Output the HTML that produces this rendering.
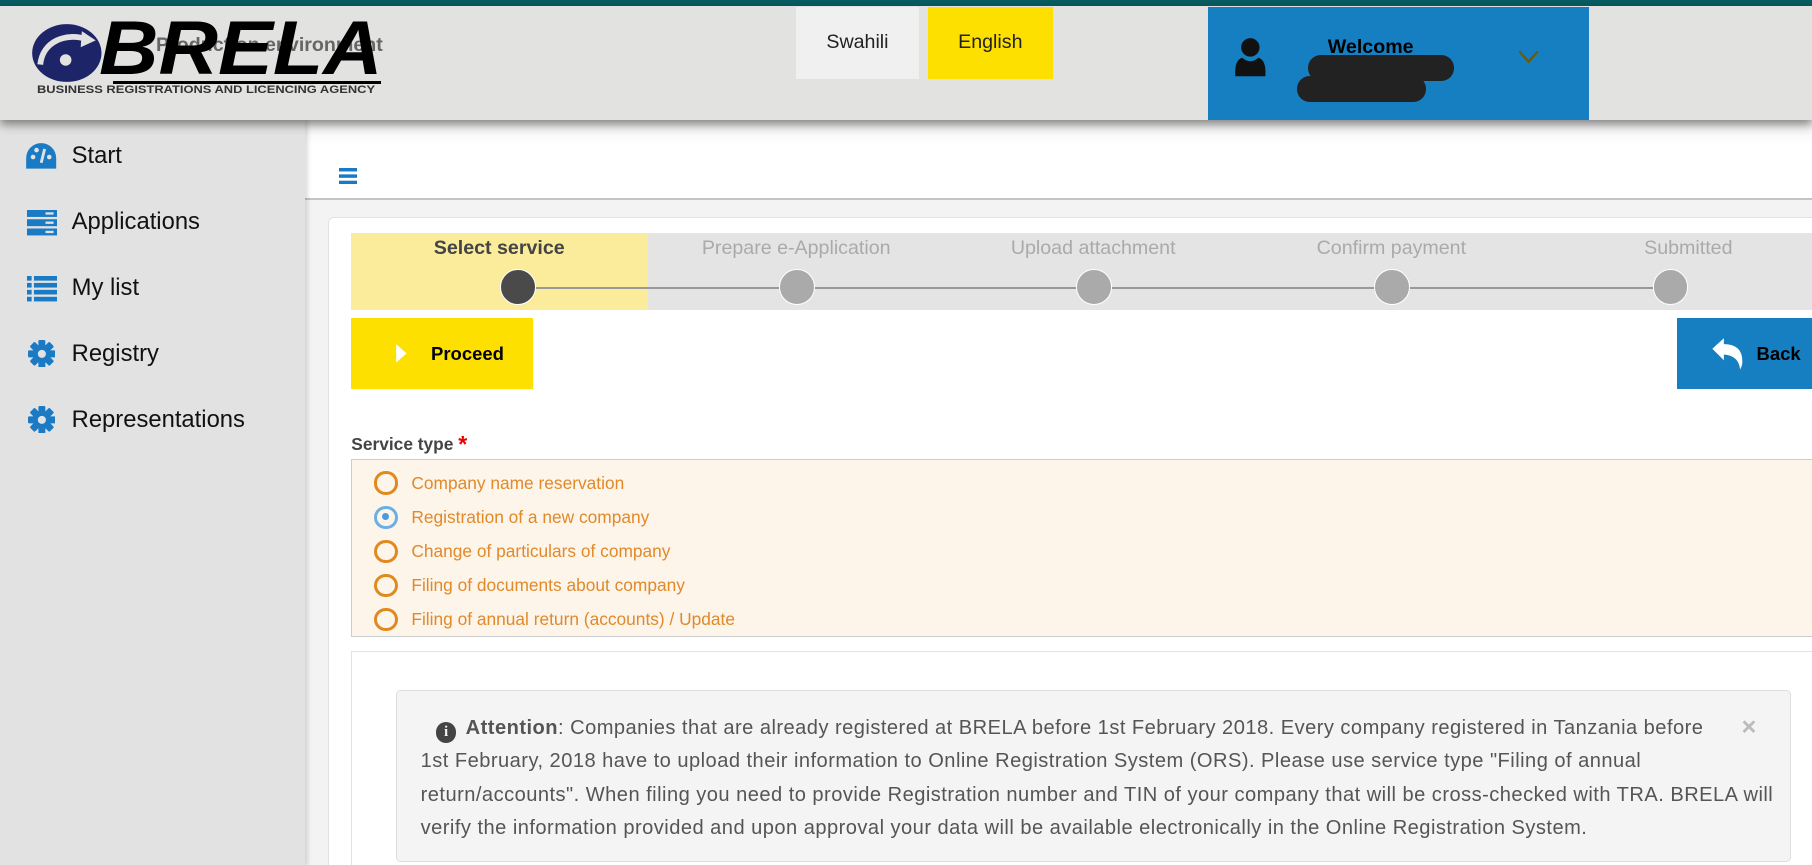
<!DOCTYPE html>
<html><head><meta charset="utf-8"><style>
*{margin:0;padding:0;box-sizing:border-box}
html,body{width:1812px;height:865px;overflow:hidden;background:#f3f3f3;font-family:"Liberation Sans",Arial,sans-serif}
#w{position:relative;width:1568px;height:749px;zoom:1.1556;overflow:hidden;background:#f3f3f3}
.a{position:absolute}
.r{display:inline-block;width:20px;height:20px;border:3px solid #e08a1e;border-radius:50%;vertical-align:middle;margin-right:12px;position:relative;top:-1px}
</style></head><body><div id="w">
<div class="a" style="left:0;top:0;width:1568px;height:5px;background:#085c62"></div>
<div class="a" style="left:0;top:5px;width:1568px;height:99px;background:#e2e2e0;box-shadow:0 4px 8px rgba(0,0,0,.45);z-index:3"></div>
<!-- logo -->
<div class="a" style="left:0;top:5px;width:700px;height:99px;z-index:4">
<svg class="a" style="left:27px;top:15px" width="62" height="52" viewBox="0 0 62 52"><ellipse cx="31" cy="26" rx="30" ry="25" fill="#1d2468"/><path d="M8 36 C10 16 30 8 48 14" stroke="#e2e2e0" stroke-width="5" fill="none"/><path d="M44 7 L56 15 L43 21Z" fill="#e2e2e0"/><circle cx="30" cy="32" r="5" fill="#e2e2e0"/></svg>
<div class="a" style="left:135px;top:24px;font-size:17px;font-weight:bold;color:#666">Production environment</div>
<div class="a" style="left:86px;top:6px;font-size:66px;font-weight:bold;font-style:italic;color:#000;line-height:62px;transform:scaleX(1.08);transform-origin:0 0">BRELA</div>
<div class="a" style="left:98px;top:65px;width:232px;height:3px;background:#000"></div>
<div class="a" style="left:32px;top:68px;font-size:9.3px;font-weight:bold;color:#333;white-space:nowrap;transform:scaleX(1.2);transform-origin:0 0">BUSINESS REGISTRATIONS AND LICENCING AGENCY</div>
<div class="a" style="left:689px;top:1px;width:106px;height:62px;background:#f0f0f0;font-size:17px;color:#222;text-align:center;line-height:62px">Swahili</div>
</div>
<div class="a" style="left:803px;top:6px;width:108px;height:62px;background:#fde000;font-size:17px;color:#222;text-align:center;line-height:62px;z-index:4">English</div>
<div class="a" style="left:1045px;top:6px;width:330px;height:98px;background:#167fc2;z-index:4">
<svg class="a" style="left:22px;top:26px" width="30" height="36" viewBox="0 0 30 36"><circle cx="15" cy="9" r="8" fill="#111"/><path d="M2 34 Q1 20 8 18 Q15 24 22 18 Q29 20 28 34Z" fill="#111"/></svg>
<div class="a" style="left:104px;top:25px;font-size:17px;font-weight:bold;color:#000">Welcome</div>
<div class="a" style="left:87px;top:42px;width:126px;height:22px;border-radius:11px;background:#222"></div>
<div class="a" style="left:77px;top:60px;width:112px;height:22px;border-radius:11px;background:#222"></div>
<svg class="a" style="left:268px;top:36px" width="20" height="14"><path d="M2 2 L10 11 L18 2" stroke="#665c10" stroke-width="2" fill="none"/></svg>
</div>
<!-- sidebar -->
<div class="a" style="left:0;top:104px;width:264px;height:645px;background:#e2e2e2;box-shadow:2px 0 4px rgba(0,0,0,.15);z-index:2;font-size:20.6px;color:#111">
<svg class="a" style="left:22px;top:19px" width="28" height="24" viewBox="0 0 28 24"><path d="M14 1 A13 13 0 0 0 1 14 L1 23 L27 23 L27 14 A13 13 0 0 0 14 1Z" fill="#1a7ac4"/><circle cx="7" cy="13" r="2" fill="#e2e2e2"/><circle cx="10" cy="7" r="2" fill="#e2e2e2"/><circle cx="21" cy="13" r="2" fill="#e2e2e2"/><path d="M14 18 L17 6" stroke="#e2e2e2" stroke-width="2.5"/></svg>
<div class="a" style="left:62px;top:19px">Start</div>
<svg class="a" style="left:23px;top:78px" width="26" height="22"><rect y="0" width="26" height="6" fill="#1a7ac4"/><rect y="8" width="26" height="6" fill="#1a7ac4"/><rect y="16" width="26" height="6" fill="#1a7ac4"/><rect x="16" y="2" width="7" height="2" fill="#e2e2e2"/><rect x="16" y="10" width="7" height="2" fill="#e2e2e2"/><rect x="16" y="18" width="7" height="2" fill="#e2e2e2"/></svg>
<div class="a" style="left:62px;top:76px">Applications</div>
<svg class="a" style="left:23px;top:135px" width="26" height="22"><g fill="#1a7ac4"><rect y="0" width="4" height="4"/><rect x="6" y="0" width="20" height="4"/><rect y="6" width="4" height="4"/><rect x="6" y="6" width="20" height="4"/><rect y="12" width="4" height="4"/><rect x="6" y="12" width="20" height="4"/><rect y="18" width="4" height="4"/><rect x="6" y="18" width="20" height="4"/></g></svg>
<div class="a" style="left:62px;top:133px">My list</div>
<svg class="a" style="left:24px;top:190px" width="24" height="24" viewBox="0 0 24 24"><g fill="#1a7ac4"><circle cx="12" cy="12" r="8"/><rect x="9" y="0" width="6" height="24" rx="1"/><rect x="0" y="9" width="24" height="6" rx="1"/><rect x="9" y="0" width="6" height="24" rx="1" transform="rotate(45 12 12)"/><rect x="9" y="0" width="6" height="24" rx="1" transform="rotate(-45 12 12)"/></g><circle cx="12" cy="12" r="3.5" fill="#e2e2e2"/></svg>
<div class="a" style="left:62px;top:190px">Registry</div>
<svg class="a" style="left:24px;top:247px" width="24" height="24" viewBox="0 0 24 24"><g fill="#1a7ac4"><circle cx="12" cy="12" r="8"/><rect x="9" y="0" width="6" height="24" rx="1"/><rect x="0" y="9" width="24" height="6" rx="1"/><rect x="9" y="0" width="6" height="24" rx="1" transform="rotate(45 12 12)"/><rect x="9" y="0" width="6" height="24" rx="1" transform="rotate(-45 12 12)"/></g><circle cx="12" cy="12" r="3.5" fill="#e2e2e2"/></svg>
<div class="a" style="left:62px;top:247px">Representations</div>
</div>
<!-- main -->
<div class="a" style="left:264px;top:104px;width:1304px;height:69px;background:linear-gradient(#eee,#fff 30%);border-bottom:2px solid #c4c4c4"></div>
<svg class="a" style="left:293px;top:145px" width="16" height="14"><g fill="#1a7ac4"><rect y="0" width="16" height="3"/><rect y="5.5" width="16" height="3"/><rect y="11" width="16" height="3"/></g></svg>
<div class="a" style="left:284px;top:188px;width:1290px;height:570px;background:#fff;border:1px solid #e2e2e2;border-radius:5px"></div>
<!-- stepper -->
<div class="a" style="left:304px;top:202px;width:1264px;height:66px;background:#e4e4e4"></div>
<div class="a" style="left:304px;top:202px;width:257px;height:66px;background:#faec9b"></div>
<div class="a" style="left:448px;top:248px;width:1000px;height:2px;background:#999"></div>
<div class="a" style="left:433px;top:233px;width:31px;height:31px;border-radius:50%;background:#4a4a4a;border:1px solid #fff"></div>
<div class="a" style="left:674px;top:233px;width:31px;height:31px;border-radius:50%;background:#aaa;border:1px solid #fff"></div>
<div class="a" style="left:931px;top:233px;width:31px;height:31px;border-radius:50%;background:#aaa;border:1px solid #fff"></div>
<div class="a" style="left:1189px;top:233px;width:31px;height:31px;border-radius:50%;background:#aaa;border:1px solid #fff"></div>
<div class="a" style="left:1430px;top:233px;width:31px;height:31px;border-radius:50%;background:#aaa;border:1px solid #fff"></div>
<div class="a" style="left:332px;top:205px;width:200px;text-align:center;font-size:17px;font-weight:bold;color:#444">Select service</div>
<div class="a" style="left:589px;top:205px;width:200px;text-align:center;font-size:17px;color:#aaa">Prepare e-Application</div>
<div class="a" style="left:846px;top:205px;width:200px;text-align:center;font-size:17px;color:#aaa">Upload attachment</div>
<div class="a" style="left:1104px;top:205px;width:200px;text-align:center;font-size:17px;color:#aaa">Confirm payment</div>
<div class="a" style="left:1361px;top:205px;width:200px;text-align:center;font-size:17px;color:#aaa">Submitted</div>
<!-- buttons -->
<div class="a" style="left:304px;top:275px;width:157px;height:62px;background:#fde000"></div>
<svg class="a" style="left:342px;top:297px" width="12" height="18"><path d="M1 1 L10 9 L1 17Z" fill="#fff"/></svg>
<div class="a" style="left:373px;top:297px;font-size:16px;font-weight:bold;color:#000">Proceed</div>
<div class="a" style="left:1451px;top:275px;width:117px;height:62px;background:#167fc2"></div>
<svg class="a" style="left:1480px;top:291px" width="32" height="30" viewBox="0 0 32 30"><path d="M2 11 L12 2 L12 7 Q28 7 28 22 Q28 26 26 29 Q25 17 12 16 L12 21Z" fill="#fff"/></svg>
<div class="a" style="left:1520px;top:297px;font-size:16px;font-weight:bold;color:#000">Back</div>
<!-- service type -->
<div class="a" style="left:304px;top:371px;font-size:15px;font-weight:bold;color:#444">Service type <span style="color:#e00;font-size:20px;position:relative;top:2px">*</span></div>
<div class="a" style="left:304px;top:397px;width:1270px;height:154px;background:#fdf4ea;border:1px solid #ccc"></div>
<div style="position:absolute;left:324px;top:403px;font-size:15px;color:#e08a2a;line-height:29.5px">
<div><span class="r"></span>Company name reservation</div>
<div><span class="r" style="border-color:#6ab0e6"><span style="position:absolute;left:4px;top:4px;width:6px;height:6px;border-radius:50%;background:#4a9ae0"></span></span>Registration of a new company</div>
<div><span class="r"></span>Change of particulars of company</div>
<div><span class="r"></span>Filing of documents about company</div>
<div><span class="r"></span>Filing of annual return (accounts) / Update</div>
</div>
<div class="a" style="left:304px;top:563px;width:1270px;height:200px;border:1px solid #e2e2e2;background:#fff"></div>
<div class="a" style="left:343px;top:597px;width:1207px;height:149px;background:#f4f4f4;border:1px solid #ddd;border-radius:4px"></div>
<div class="a" style="left:364px;top:616px;width:1182px;font-size:17.4px;letter-spacing:0.4px;color:#555;line-height:29px">
<span style="float:right;width:52px;height:20px"></span><span style="display:inline-block;width:18px;height:18px;border-radius:50%;background:#444;color:#f4f4f4;font-size:13px;font-weight:bold;text-align:center;line-height:18px;margin:0 8px 0 13px;vertical-align:-2px;font-family:'Liberation Serif',serif;letter-spacing:0">i</span><b>Attention</b>: Companies that are already registered at BRELA before 1st February 2018. Every company registered in Tanzania before 1st February, 2018 have to upload their information to Online Registration System (ORS). Please use service type "Filing of annual return/accounts". When filing you need to provide Registration number and TIN of your company that will be cross-checked with TRA. BRELA will verify the information provided and upon approval your data will be available electronically in the Online Registration System.</div>
<div class="a" style="left:1507px;top:617px;font-size:22px;font-weight:bold;color:#bbb">×</div>
</div></body></html>
